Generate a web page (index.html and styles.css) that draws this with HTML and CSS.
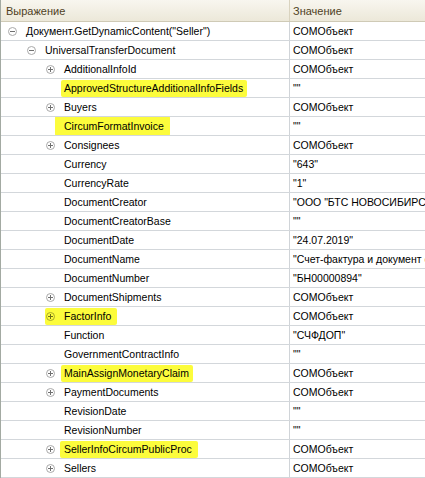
FILE: index.html
```html
<!DOCTYPE html>
<html lang="ru">
<head>
<meta charset="utf-8">
<title>Выражение</title>
<link rel="stylesheet" href="styles.css">
</head>
<body>
<div class="tree">
  <div class="head">
    <div class="hc h1">Выражение</div>
    <div class="hc h2">Значение</div>
  </div>

  <div class="row">
    <div class="c1 l0"><svg class="ic" width="9" height="9" viewBox="0 0 9 9"><circle cx="4.5" cy="4.5" r="4" fill="none" stroke="#a8a8a8"/><path d="M2 4.5h5" stroke="#707070"/></svg><span class="t">Документ.GetDynamicContent("Seller")</span></div>
    <div class="c2">COMОбъект</div>
  </div>
  <div class="row">
    <div class="c1 l1"><svg class="ic" width="9" height="9" viewBox="0 0 9 9"><circle cx="4.5" cy="4.5" r="4" fill="none" stroke="#a8a8a8"/><path d="M2 4.5h5" stroke="#707070"/></svg><span class="t">UniversalTransferDocument</span></div>
    <div class="c2">COMОбъект</div>
  </div>
  <div class="row">
    <div class="c1 l2"><svg class="ic" width="9" height="9" viewBox="0 0 9 9"><circle cx="4.5" cy="4.5" r="4" fill="none" stroke="#a8a8a8"/><path d="M2 4.5h5M4.5 2v5" stroke="#707070"/></svg><span class="t">AdditionalInfoId</span></div>
    <div class="c2">COMОбъект</div>
  </div>
  <div class="row">
    <div class="c1 l2"><span class="ic"></span><span class="t hl hl-a">ApprovedStructureAdditionalInfoFields</span></div>
    <div class="c2">""</div>
  </div>
  <div class="row">
    <div class="c1 l2"><svg class="ic" width="9" height="9" viewBox="0 0 9 9"><circle cx="4.5" cy="4.5" r="4" fill="none" stroke="#a8a8a8"/><path d="M2 4.5h5M4.5 2v5" stroke="#707070"/></svg><span class="t">Buyers</span></div>
    <div class="c2">COMОбъект</div>
  </div>
  <div class="row">
    <div class="c1 l2"><span class="ic"></span><span class="t hl hl-b">CircumFormatInvoice</span></div>
    <div class="c2">""</div>
  </div>
  <div class="row">
    <div class="c1 l2"><svg class="ic" width="9" height="9" viewBox="0 0 9 9"><circle cx="4.5" cy="4.5" r="4" fill="none" stroke="#a8a8a8"/><path d="M2 4.5h5M4.5 2v5" stroke="#707070"/></svg><span class="t">Consignees</span></div>
    <div class="c2">COMОбъект</div>
  </div>
  <div class="row">
    <div class="c1 l2"><span class="ic"></span><span class="t">Currency</span></div>
    <div class="c2">"643"</div>
  </div>
  <div class="row">
    <div class="c1 l2"><span class="ic"></span><span class="t">CurrencyRate</span></div>
    <div class="c2">"1"</div>
  </div>
  <div class="row">
    <div class="c1 l2"><span class="ic"></span><span class="t">DocumentCreator</span></div>
    <div class="c2">"ООО "БТС НОВОСИБИРСК""</div>
  </div>
  <div class="row">
    <div class="c1 l2"><span class="ic"></span><span class="t">DocumentCreatorBase</span></div>
    <div class="c2">""</div>
  </div>
  <div class="row">
    <div class="c1 l2"><span class="ic"></span><span class="t">DocumentDate</span></div>
    <div class="c2">"24.07.2019"</div>
  </div>
  <div class="row">
    <div class="c1 l2"><span class="ic"></span><span class="t">DocumentName</span></div>
    <div class="c2">"Счет-фактура и документ об отгрузке товаров"</div>
  </div>
  <div class="row">
    <div class="c1 l2"><span class="ic"></span><span class="t">DocumentNumber</span></div>
    <div class="c2">"БН00000894"</div>
  </div>
  <div class="row">
    <div class="c1 l2"><svg class="ic" width="9" height="9" viewBox="0 0 9 9"><circle cx="4.5" cy="4.5" r="4" fill="none" stroke="#a8a8a8"/><path d="M2 4.5h5M4.5 2v5" stroke="#707070"/></svg><span class="t">DocumentShipments</span></div>
    <div class="c2">COMОбъект</div>
  </div>
  <div class="row">
    <div class="c1 l2"><span class="hl hl-c"><svg class="ic" width="9" height="9" viewBox="0 0 9 9"><circle cx="4.5" cy="4.5" r="4" fill="none" stroke="#a8a828"/><path d="M2 4.5h5M4.5 2v5" stroke="#707018"/></svg><span class="t">FactorInfo</span></span></div>
    <div class="c2">COMОбъект</div>
  </div>
  <div class="row">
    <div class="c1 l2"><span class="ic"></span><span class="t">Function</span></div>
    <div class="c2">"СЧФДОП"</div>
  </div>
  <div class="row">
    <div class="c1 l2"><span class="ic"></span><span class="t">GovernmentContractInfo</span></div>
    <div class="c2">""</div>
  </div>
  <div class="row">
    <div class="c1 l2"><svg class="ic" width="9" height="9" viewBox="0 0 9 9"><circle cx="4.5" cy="4.5" r="4" fill="none" stroke="#a8a8a8"/><path d="M2 4.5h5M4.5 2v5" stroke="#707070"/></svg><span class="t hl hl-a">MainAssignMonetaryClaim</span></div>
    <div class="c2">COMОбъект</div>
  </div>
  <div class="row">
    <div class="c1 l2"><svg class="ic" width="9" height="9" viewBox="0 0 9 9"><circle cx="4.5" cy="4.5" r="4" fill="none" stroke="#a8a8a8"/><path d="M2 4.5h5M4.5 2v5" stroke="#707070"/></svg><span class="t">PaymentDocuments</span></div>
    <div class="c2">COMОбъект</div>
  </div>
  <div class="row">
    <div class="c1 l2"><span class="ic"></span><span class="t">RevisionDate</span></div>
    <div class="c2">""</div>
  </div>
  <div class="row">
    <div class="c1 l2"><span class="ic"></span><span class="t">RevisionNumber</span></div>
    <div class="c2">""</div>
  </div>
  <div class="row">
    <div class="c1 l2"><svg class="ic" width="9" height="9" viewBox="0 0 9 9"><circle cx="4.5" cy="4.5" r="4" fill="none" stroke="#a8a8a8"/><path d="M2 4.5h5M4.5 2v5" stroke="#707070"/></svg><span class="t hl hl-d">SellerInfoCircumPublicProc</span></div>
    <div class="c2">COMОбъект</div>
  </div>
  <div class="row">
    <div class="c1 l2"><svg class="ic" width="9" height="9" viewBox="0 0 9 9"><circle cx="4.5" cy="4.5" r="4" fill="none" stroke="#a8a8a8"/><path d="M2 4.5h5M4.5 2v5" stroke="#707070"/></svg><span class="t">Sellers</span></div>
    <div class="c2">COMОбъект</div>
  </div>
</div>
</body>
</html>
```

FILE: styles.css
```css
html, body {
  margin: 0;
  padding: 0;
  background: #ffffff;
}

body {
  font-family: "Liberation Sans", Arial, sans-serif;
  font-size: 10.5px;
  color: #000000;
  width: 425px;
  height: 478px;
  overflow: hidden;
}

.tree {
  width: 425px;
  border-left: 1px solid #a3aaa2;
  box-sizing: border-box;
  display: flex;
  flex-direction: column;
}

.head {
  display: grid;
  grid-template-columns: 289px 1fr;
  height: 22px;
  box-sizing: border-box;
  border-bottom: 1px solid #cfcab6;
  background: linear-gradient(#f8f6ef, #ece8d9);
}

.hc {
  display: flex;
  align-items: center;
  color: #4f3f1e;
  white-space: nowrap;
  font-size: 11px;
}

.h1 {
  padding-left: 5px;
  border-right: 1px solid #d9d3bf;
}

.h2 {
  padding-left: 3px;
}

.row {
  display: grid;
  grid-template-columns: 289px 1fr;
  height: 19px;
  box-sizing: border-box;
  border-bottom: 1px solid #d3d7db;
}

.c1 {
  display: flex;
  align-items: center;
  border-right: 1px solid #d0d4d8;
  white-space: nowrap;
  overflow: hidden;
}

.c2 {
  display: flex;
  align-items: center;
  padding-left: 3px;
  white-space: nowrap;
  overflow: hidden;
}

.l0 { padding-left: 7px; }
.l1 { padding-left: 26px; }
.l2 { padding-left: 45px; }

.ic {
  flex: 0 0 9px;
  width: 9px;
  height: 9px;
  display: block;
  margin-right: 9px;
}

.t {
  display: block;
}

.hl {
  background: #fcfc3c;
  border-radius: 2px;
  height: 17px;
  display: flex;
  align-items: center;
}

.hl-a {
  margin-left: -3px;
  padding: 0 4px 0 3px;
}

.hl-b {
  margin-left: -9px;
  padding: 0 6px 0 9px;
  height: 20px;
}

.hl-c {
  margin-left: -1px;
  padding: 0 6px 0 1px;
}

.hl-d {
  margin-left: -4px;
  padding: 0 6px 0 4px;
}
```
